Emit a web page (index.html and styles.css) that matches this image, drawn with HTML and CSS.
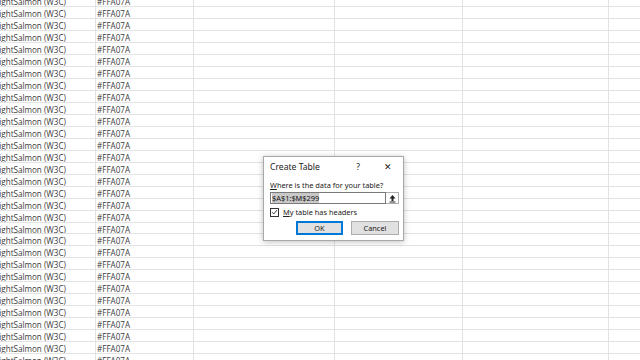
FILE: index.html
```html
<!DOCTYPE html>
<html lang="en">
<head>
  <meta charset="UTF-8">
  <title>Create Table</title>
  <link rel="stylesheet" href="styles.css">
</head>
<body>
  <div class="sheet" id="sheet"></div>

  <!-- Create Table dialog -->
  <div class="dialog">
    <div class="title-bar">
      <span class="title">Create Table</span>
      <span class="help">?</span>
      <span class="close">&#x2715;</span>
    </div>
    <div class="prompt"><u>W</u>here is the data for your table?</div>
    <div class="range-row">
      <div class="range-box"><span class="selected">$A$1:$M$299</span></div>
      <div class="collapse-btn">
        <svg width="9" height="9" viewBox="0 0 9 9">
          <path d="M4.5 1 L1.5 4.5 H3.5 V7 H5.5 V4.5 H7.5 Z" fill="#222"/>
          <rect x="1.5" y="7.5" width="6" height="1" fill="#222"/>
        </svg>
      </div>
    </div>
    <label class="check-row">
      <span class="checkbox">
        <svg width="8" height="8" viewBox="0 0 8 8">
          <path d="M1.2 4.2 L3.2 6.2 L6.8 1.8" fill="none" stroke="#222" stroke-width="1"/>
        </svg>
      </span>
      <span><u>M</u>y table has headers</span>
    </label>
    <div class="buttons">
      <button class="btn ok">OK</button>
      <button class="btn">Cancel</button>
    </div>
  </div>

  <script>
    // Fill the visible part of the worksheet
    const sheet = document.getElementById('sheet');
    for (let i = 0; i < 31; i++) {
      const row = document.createElement('div');
      row.className = 'row';
      row.innerHTML =
        '<div class="cell col-a"><span class="clip">LightSalmon (W3C)</span></div>' +
        '<div class="cell col-b">#FFA07A</div>' +
        '<div class="cell col-c"></div>' +
        '<div class="cell col-d"></div>' +
        '<div class="cell col-e"></div>' +
        '<div class="cell col-f"></div>';
      sheet.appendChild(row);
    }
  </script>
</body>
</html>
```

FILE: styles.css
```css
/* Worksheet */
body {
  margin: 0;
  background: #ffffff;
  overflow: hidden;
  width: 640px;
  height: 360px;
  position: relative;
}

.sheet {
  margin-top: -4.6px;
  font-family: 'Open Sans', sans-serif;
  font-size: 8.1px;
  color: #3a3a3a;
}

.row {
  display: flex;
  height: 11.96px;
  border-bottom: 1px solid #e3e3e3;
  box-sizing: border-box;
}

.cell {
  border-right: 1px solid #e3e3e3;
  box-sizing: border-box;
  line-height: 11px;
  padding-top: 1px;
  white-space: nowrap;
  overflow: hidden;
}

.col-a { width: 96px; }
.col-b { width: 98px; padding-left: 1px; }
.col-c { width: 141px; }
.col-d { width: 128px; }
.col-e { width: 146px; }
.col-f { flex: 1; border-right: none; }

.clip {
  margin-left: -5px;
}

/* Dialog */
.dialog {
  position: absolute;
  left: 263px;
  top: 156px;
  width: 141px;
  height: 85px;
  box-sizing: border-box;
  background: #ffffff;
  border: 1px solid #a8a8a8;
  box-shadow: 0 1px 6px rgba(0, 0, 0, 0.25);
  font-family: 'Noto Sans', sans-serif;
  font-size: 7.4px;
  color: #222222;
  padding: 0 4px 0 6px;
}

.title-bar {
  display: flex;
  align-items: center;
  height: 19px;
  font-size: 8.6px;
}

.title {
  flex: 1;
}

.help {
  width: 20px;
  margin-right: 13px;
  text-align: center;
}

.close {
  width: 14px;
  text-align: center;
  font-size: 9px;
  margin-right: 4px;
}

.prompt {
  margin-top: 4px;
  height: 11px;
  line-height: 11px;
}

.range-row {
  display: flex;
  margin-top: 1px;
  height: 12px;
}

.range-box {
  width: 117px;
  border: 1px solid #7a7a7a;
  box-sizing: border-box;
  padding: 0 1px;
  line-height: 10px;
}

.selected {
  background: #c8c8c8;
  color: #111;
}

.collapse-btn {
  width: 13px;
  border: 1px solid #adadad;
  border-left: none;
  box-sizing: border-box;
  display: flex;
  align-items: center;
  justify-content: center;
}

.check-row {
  display: flex;
  align-items: center;
  margin-top: 2.5px;
  height: 11px;
}

.checkbox {
  width: 9px;
  height: 9px;
  border: 1px solid #333;
  box-sizing: border-box;
  display: flex;
  align-items: center;
  justify-content: center;
  margin-right: 4px;
}

.buttons {
  display: flex;
  justify-content: flex-end;
  gap: 8px;
  margin-top: 3.5px;
}

.btn {
  width: 48px;
  height: 14px;
  padding: 0;
  font-family: 'Noto Sans', sans-serif;
  font-size: 7.4px;
  color: #222;
  background: #e1e1e1;
  border: 1px solid #adadad;
}

.btn.ok {
  width: 47px;
  border: 1px solid #0078d7;
  box-shadow: inset 0 0 0 1px #0078d7;
}
```
